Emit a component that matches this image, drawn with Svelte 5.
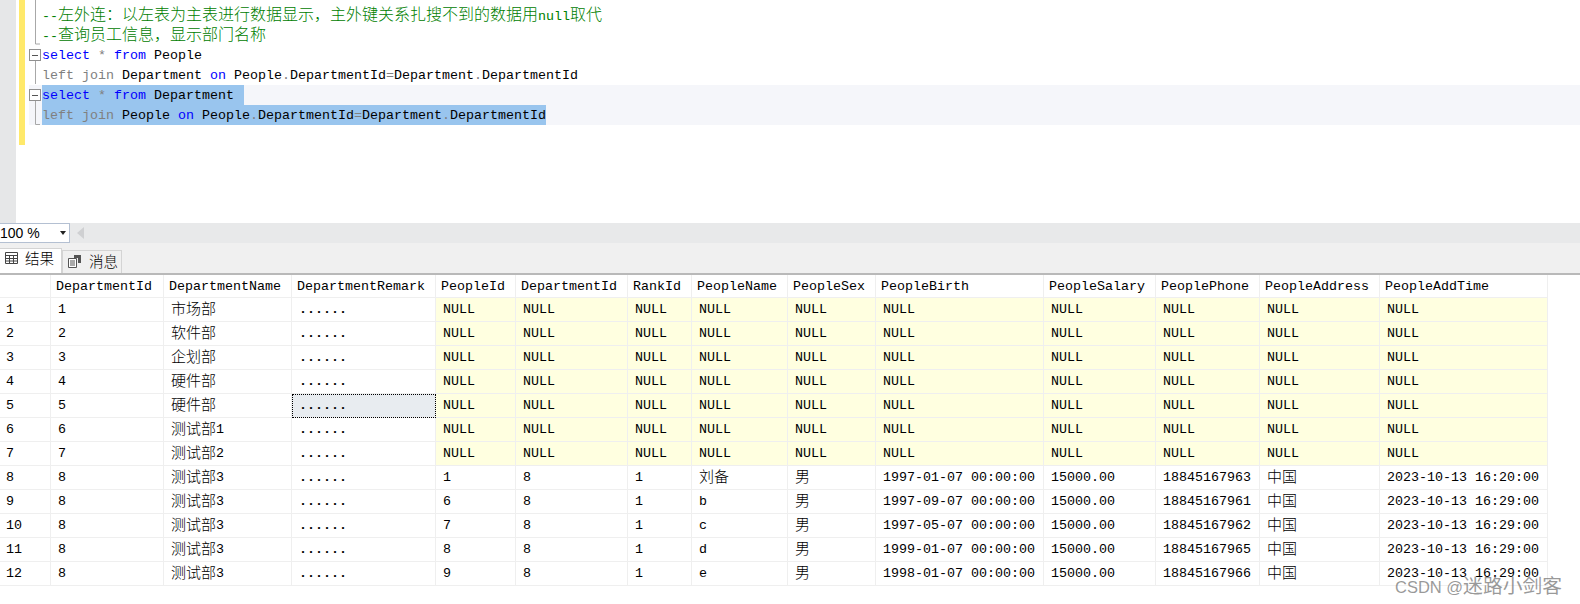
<script>
  const cols = ['DepartmentId','DepartmentName','DepartmentRemark','PeopleId','DepartmentId','RankId','PeopleName','PeopleSex','PeopleBirth','PeopleSalary','PeoplePhone','PeopleAddress','PeopleAddTime'];
  const depts = [[1,'市场部'],[2,'软件部'],[3,'企划部'],[4,'硬件部'],[5,'硬件部'],[6,'测试部1'],[7,'测试部2']];
  const people = [
    [1,'刘备','1997-01-07','18845167963','16:20:00'],
    [6,'b','1997-09-07','18845167961','16:29:00'],
    [7,'c','1997-05-07','18845167962','16:29:00'],
    [8,'d','1999-01-07','18845167965','16:29:00'],
    [9,'e','1998-01-07','18845167966','16:29:00']
  ];
  const rows = [
    ...depts.map(([id, name]) => ({ nul: true, cells: [id, name, '......', ...Array(10).fill('NULL')] })),
    ...people.map(([pid, name, birth, phone, time]) => ({ nul: false, cells: [8, '测试部3', '......', pid, 8, 1, name, '男', birth + ' 00:00:00', '15000.00', phone, '中国', '2023-10-13 ' + time] }))
  ];
  const runs = (v) => String(v).match(/[^\x00-\x7f]+|[\x00-\x7f]+/g).map((t) => ({ t, cn: /[^\x00-\x7f]/.test(t) }));
</script>

{#snippet txt(v)}{#each runs(v) as r}{#if r.cn}<span class="cn">{r.t}</span>{:else}{r.t}{/if}{/each}{/snippet}

<div class="page">
  <div class="editor">
    <div class="gutter"></div>
    <div class="changebar"></div>
    <div class="code">
      <svg class="folds" width="14" height="130" viewBox="0 0 14 130">
        <path d="M6.5 0V44H11M6.5 61V84M6.5 101V124.5H11" fill="none" stroke="#a8a8a8" />
        <rect x="0.5" y="49.5" width="11" height="11" fill="#fff" stroke="#909090" />
        <path d="M3 55.5H9" stroke="#555" />
        <rect x="0.5" y="89.5" width="11" height="11" fill="#fff" stroke="#909090" />
        <path d="M3 95.5H9" stroke="#555" />
      </svg>
      <div class="line com">{@render txt('--左外连：以左表为主表进行数据显示，主外键关系扎搜不到的数据用null取代')}</div>
      <div class="line com">{@render txt('--查询员工信息，显示部门名称')}</div>
      <div class="line"><b>select</b> <i>*</i> <b>from</b> People</div>
      <div class="line"><i>left join</i> Department <b>on</b> People<i>.</i>DepartmentId<i>=</i>Department<i>.</i>DepartmentId</div>
      <div class="line band"><span class="sel eol"><b>select</b> <i>*</i> <b>from</b> Department</span></div>
      <div class="line band"><span class="sel"><i>left join</i> People <b>on</b> People<i>.</i>DepartmentId<i>=</i>Department<i>.</i>DepartmentId</span></div>
    </div>
  </div>

  <div class="toolbar">
    <div class="zoom">100 %<span class="caret"></span></div>
    <span class="arrow"></span>
  </div>

  <div class="tabs">
    <div class="tab active">
      <svg width="13" height="12" viewBox="0 0 13 12"><path d="M.5.5h12v11H.5zM.5 3.5h12M.5 6.5h12M.5 9h12M4.5 3.5v8M8.5 3.5v8" fill="none" stroke="#444" /></svg>
      <span>结果</span>
    </div>
    <div class="tab">
      <svg width="14" height="14" viewBox="0 0 14 14"><path d="M.5 4.5h8v9h-8zM2 7h5M2 9h5M2 11h5" fill="#fff" stroke="#555" /><path d="M6 1h7v8h-3V4H6z" fill="#555" /></svg>
      <span>消息</span>
    </div>
  </div>

  <div class="grid">
    <div class="row head">
      <div class="c"></div>
      {#each cols as c}<div class="c">{c}</div>{/each}
    </div>
    {#each rows as row, i}
      <div class="row">
        <div class="c num">{i + 1}</div>
        {#each row.cells as v, j}
          <div class="c val" class:nul={row.nul && j >= 3} class:cur={i === 4 && j === 2} class:dots={j === 2}>{@render txt(v)}</div>
        {/each}
      </div>
    {/each}
  </div>

  <div class="mark"><span class="latin">CSDN @</span>迷路小剑客</div>
</div>

<style>
  :global(body) { margin: 0; background: #fff; }
  .page { position: relative; width: 1580px; height: 604px; overflow: hidden; font-family: "Liberation Mono", "Noto Sans CJK SC", monospace; font-size: 13.33px; color: #000; }
  .cn { font-family: "Noto Sans CJK SC", sans-serif; font-weight: 300; line-height: 1; }

  .editor { display: flex; height: 223px; }
  .gutter { width: 16px; background: #e6e7e8; }
  .changebar { width: 6px; height: 145px; margin: 0 4px 0 3px; background: #ffe96a; }
  .code { position: relative; flex: 1; padding-top: 5px; }
  .folds { position: absolute; left: 0; top: 0; }
  .line { height: 20px; line-height: 22px; padding-left: 13px; white-space: pre; }
  .line .cn { font-size: 16px; }
  .line.com { line-height: 19px; }
  .line b { font-weight: normal; color: #0000ff; }
  .line i { font-style: normal; color: #808080; }
  .com { color: #008000; }
  .band { background: #f5f6fa; }
  .sel { display: inline-block; height: 20px; background: #99c5ee; vertical-align: top; }
  .eol { padding-right: 10px; }

  .toolbar { display: flex; align-items: center; height: 20px; background: #e8e9ea; }
  .zoom { box-sizing: border-box; display: flex; align-items: center; width: 70px; height: 20px; background: #fff; border: 1px solid #b4c0d2; border-left: 0; font: 14px "Liberation Sans", sans-serif; position: relative; }
  .caret { position: absolute; left: 60px; top: 7px; border: 3.5px solid transparent; border-top: 4px solid #222; border-bottom: 0; }
  .arrow { margin-left: 7px; border: 6px solid transparent; border-right: 7px solid #cfd0d2; border-left: 0; }

  .tabs { display: flex; align-items: flex-end; height: 30px; background: #f0f0f0; font: 14.5px "Noto Sans CJK SC", sans-serif; border-bottom: 2px solid #b9b9b9; }
  .tab { box-sizing: border-box; display: flex; align-items: center; gap: 7px; width: 60px; height: 23px; padding: 0 0 2px 5px; border: 1px solid #d4d4d4; border-bottom: 0; }
  .tab.active { width: 62px; height: 25px; padding: 0 0 6px 5px; background: #fff; border-left: 0; border-right-color: #d4d4d4; }
  .tab span { font-weight: 300; line-height: 1; }

  .grid { width: 1548px; }
  .row { display: grid; grid-template-columns: 51px 113px 128px 144px 80px 112px 64px 96px 88px 168px 112px 104px 120px 168px; grid-template-rows: 24px; height: 24px; }
  .head { height: 23px; grid-template-rows: 23px; }
  .c { box-sizing: border-box; padding-left: 5px; border-right: 1px solid #efefef; border-bottom: 1px solid #efefef; line-height: 23px; white-space: nowrap; overflow: visible; }
  .row:not(.head) .c { line-height: 23px; }
  .num { padding-left: 6px; }
  .val { padding-left: 7px; }
  .val .cn { font-size: 15px; position: relative; top: 1px; }
  .dots { font-weight: bold; }
  .nul { background: #ffffe0; }
  .cur { background: #e8ecf0; outline: 1px dotted #000; outline-offset: -1px; }

  .mark { position: absolute; left: 1395px; top: 571px; font: 19.8px "Noto Sans CJK SC", sans-serif; line-height: 28px; color: rgba(120, 120, 120, 0.75); white-space: nowrap; }
  .latin { font: 16.5px "Liberation Sans", sans-serif; }
</style>
